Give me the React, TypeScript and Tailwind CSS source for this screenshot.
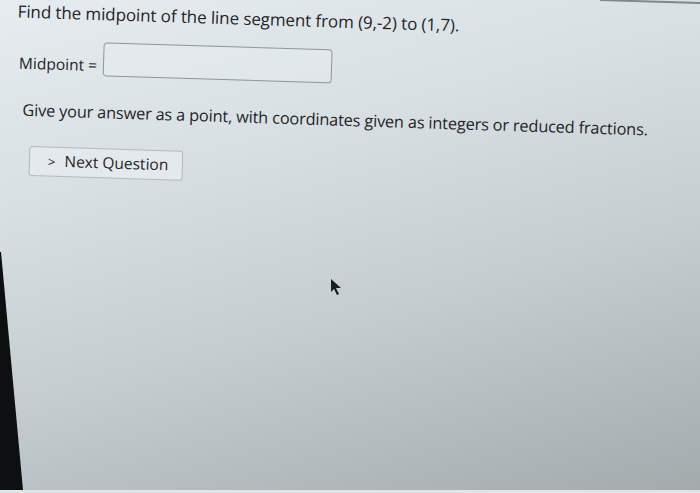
import React from "react";

export default function App() {
  return (
    <div className="relative w-[700px] h-[493px] overflow-hidden bg-[linear-gradient(165deg,#e6ecef_0%,#d8e0e4_30%,#c4cdd0_60%,#a2aaac_100%)] font-['Open_Sans',sans-serif] text-[#1f2428]">
      <div className="origin-top-left rotate-[1.8deg] pt-[0px] pl-[18px]">
        <p className="text-[17px] leading-[22px] tracking-[-0.1px]">
          Find the midpoint of the line segment from (9,-2) to (1,7).
        </p>
        <div className="mt-[17px] ml-[3px] flex items-start gap-[6px]">
          <span className="pt-[6px] text-[15.5px] leading-[34px]">Midpoint =</span>
          <div className="w-[229px] h-[34px] rounded-[4px] border border-[#8f9699] bg-[#e9eef0]/40" />
        </div>
        <p className="mt-[19px] ml-[8px] text-[16.3px] leading-[22px] tracking-[-0.15px]">
          Give your answer as a point, with coordinates given as integers or reduced fractions.
        </p>
        <div className="mt-[25px] ml-[16px]">
          <button className="flex items-center gap-[9px] h-[30px] w-[154px] pl-[18px] rounded-[3px] border border-[#b3babd] bg-[#e3e9ec] text-[15.5px]">
            <span className="text-[13px] leading-none">&gt;</span>
            <span>Next Question</span>
          </button>
        </div>
      </div>
      <svg className="absolute left-[330px] top-[278px]" width="14" height="18" viewBox="0 0 14 18">
        <path d="M1 1 L1 14 L4 11 L7 17 L9 16 L6 10 L11 10 Z" fill="#1b1d1f" />
      </svg>
      <svg className="absolute left-0 top-0" width="700" height="493" viewBox="0 0 700 493">
        <polygon points="0,252 1,252 23,490 0,490" fill="#0d0f10" />
        <rect x="0" y="490" width="700" height="3" fill="#dfe4e6" />
        <line x1="600" y1="0" x2="700" y2="3" stroke="#7f878a" strokeWidth="2" />
      </svg>
    </div>
  );
}
